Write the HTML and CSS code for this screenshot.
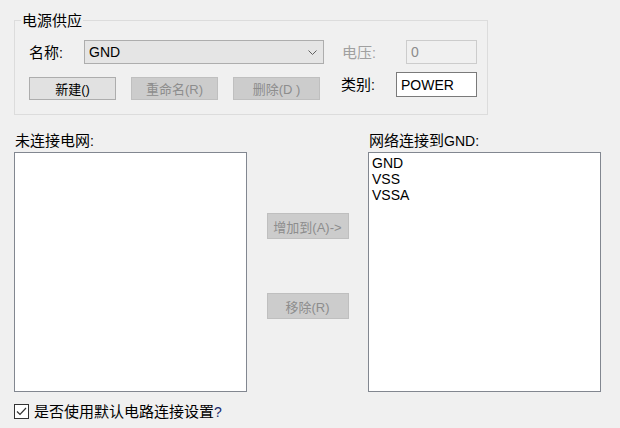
FILE: index.html
```html
<!DOCTYPE html>
<html lang="zh">
<head>
<meta charset="utf-8">
<link rel="stylesheet" href="styles.css">
</head>
<body>
<div class="group">
  <span class="legend cjk">电源供应</span>
  <div class="row1">
    <span class="lbl name-lbl"><span class="cjk">名称</span>:</span>
    <div class="combo"><span>GND</span>
      <svg class="chev" width="9" height="5" viewBox="0 0 9 5"><path d="M0.5 0.5 L4.5 4.5 L8.5 0.5" fill="none" stroke="#606060" stroke-width="1"/></svg>
    </div>
    <span class="lbl dis volt-lbl"><span class="cjk">电压</span>:</span>
    <div class="input dis-input">0</div>
  </div>
  <div class="row2">
    <div class="btns">
      <div class="btn">新建()</div>
      <div class="btn disabled">重命名(R)</div>
      <div class="btn disabled">删除(D )</div>
    </div>
    <span class="lbl type-lbl"><span class="cjk">类别</span>:</span>
    <div class="input type-input">POWER</div>
  </div>
</div>

<div class="lists">
  <div class="col">
    <div class="cap"><span class="cjk">未连接电网</span>:</div>
    <div class="listbox"></div>
  </div>
  <div class="mid">
    <div class="btn disabled mbtn">增加到(A)-&gt;</div>
    <div class="btn disabled mbtn">移除(R)</div>
  </div>
  <div class="col">
    <div class="cap"><span class="cjk">网络连接到</span>GND:</div>
    <div class="listbox">
      <div class="item">GND</div>
      <div class="item">VSS</div>
      <div class="item">VSSA</div>
    </div>
  </div>
</div>

<div class="check-row">
  <span class="checkbox">
    <svg width="11" height="9" viewBox="0 0 11 9"><path d="M1 4.5 L4 7.5 L10 1" fill="none" stroke="#333" stroke-width="1.2"/></svg>
  </span>
  <span><span class="cjk">是否使用默认电路连接设置</span><span class="q">?</span></span>
</div>
</body>
</html>
```
FILE: styles.css
```css
html, body {
  margin: 0;
  padding: 0;
}
body {
  background: #f0f0f0;
  width: 620px;
  height: 428px;
  overflow: hidden;
  font-family: "Liberation Sans", "Noto Sans CJK SC", sans-serif;
  font-size: 14px;
  color: #000;
  padding-top: 20px;
  box-sizing: border-box;
}
.cjk {
  font-family: "Noto Sans CJK SC", sans-serif;
  font-size: 15px;
}
.group {
  position: relative;
  margin-left: 14px;
  width: 474px;
  height: 95px;
  border: 1px solid #dcdcdc;
  box-sizing: border-box;
  padding: 19px 0 0 14px;
}
.legend {
  position: absolute;
  left: 6px;
  top: -10px;
  padding: 0 1px;
  background: #f0f0f0;
  line-height: 18px;
}
.row1 {
  display: flex;
  align-items: center;
  height: 24px;
}
.lbl {
  line-height: 18px;
}
.name-lbl { width: 55px; }
.combo {
  width: 240px;
  height: 24px;
  box-sizing: border-box;
  border: 1px solid #adadad;
  background: #e5e5e5;
  display: flex;
  align-items: center;
  justify-content: space-between;
  padding: 0 6px 0 4px;
}
.chev { display: block; }
.dis { color: #a0a0a0; }
.volt-lbl { margin-left: 18px; width: 64px; }
.input {
  box-sizing: border-box;
  display: flex;
  align-items: center;
  padding-left: 4px;
}
.dis-input {
  width: 71px;
  height: 24px;
  border: 1px solid #cccccc;
  background: #f0f0f0;
  color: #8c8c8c;
}
.row2 {
  display: flex;
  align-items: flex-start;
  margin-top: 8px;
}
.btns {
  display: flex;
  gap: 15px;
  margin-top: 5px;
}
.btn {
  width: 87px;
  height: 23px;
  box-sizing: border-box;
  border: 1px solid #adadad;
  background: #e1e1e1;
  display: flex;
  align-items: center;
  justify-content: center;
  font-size: 13px;
}
.btn.disabled {
  background: #cccccc;
  border-color: #bfbfbf;
  color: #8d8d8d;
}
.type-lbl {
  margin-left: 21px;
  width: 55px;
  margin-top: 3px;
}
.type-input {
  width: 81px;
  height: 25px;
  border: 1px solid #7a7a7a;
  background: #fff;
  padding-left: 4px;
}
.lists {
  display: flex;
  margin-left: 14px;
  margin-top: 18px;
}
.col {
  width: 233px;
  display: flex;
  flex-direction: column;
}
.cap {
  height: 19px;
  line-height: 14px;
  padding-left: 1px;
}
.listbox {
  height: 240px;
  box-sizing: border-box;
  border: 1px solid #828790;
  background: #fff;
  padding: 2px 0 0 3px;
}
.item {
  line-height: 16px;
}
.mid {
  width: 121px;
  display: flex;
  flex-direction: column;
  align-items: center;
  padding-top: 80px;
  gap: 54px;
}
.mbtn {
  width: 82px;
  height: 26px;
}
.check-row {
  display: flex;
  align-items: center;
  margin-left: 14px;
  margin-top: 11px;
  gap: 5px;
  line-height: 16px;
}
.checkbox {
  width: 15px;
  height: 15px;
  box-sizing: border-box;
  border: 1px solid #333;
  background: #fff;
  display: flex;
  align-items: center;
  justify-content: center;
}
.q { color: #1a2a6c; }
```
